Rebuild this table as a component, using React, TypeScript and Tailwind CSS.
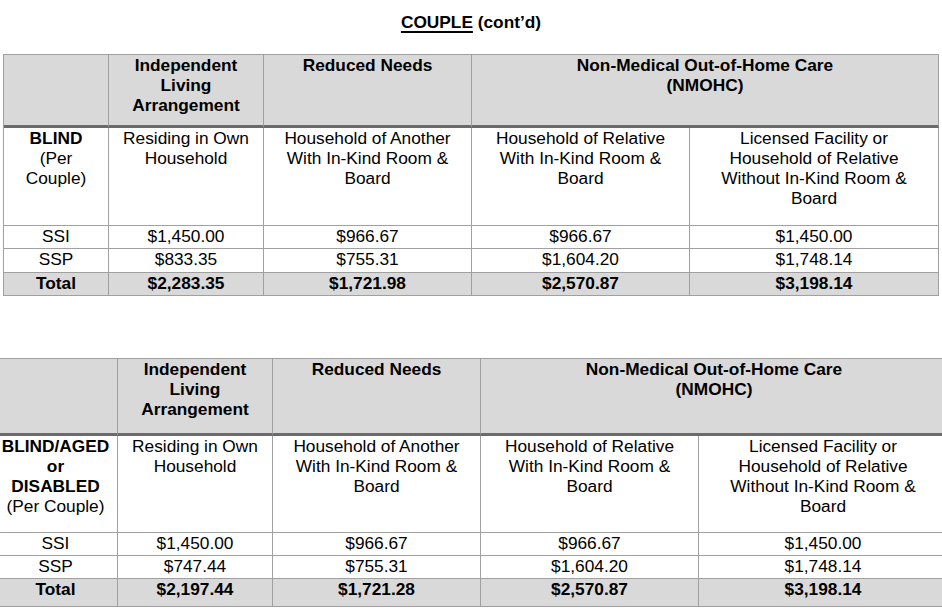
import React from "react";

type Block = {
  rowLabel: React.ReactNode;
  ssi: string[];
  ssp: string[];
  total: string[];
};

const subHeads = [
  ["Residing in Own", "Household"],
  ["Household of Another", "With In-Kind Room &", "Board"],
  ["Household of Relative", "With In-Kind Room &", "Board"],
  ["Licensed Facility or", "Household of Relative", "Without In-Kind Room &", "Board"],
];

function Lines({ lines }: { lines: string[] }) {
  return (
    <>
      {lines.map((l, i) => (
        <div key={i} className="whitespace-nowrap">
          {l}
        </div>
      ))}
    </>
  );
}

const cell = "border-r border-b border-[#a0a0a0] text-center";
const headCell = "border-r border-b-[3px] border-[#a0a0a0] border-b-[#6b6b6b] bg-[#d9d9d9] text-center font-bold";

function RateTable({ block, wide }: { block: Block; wide?: boolean }) {
  const grid = wide
    ? "grid grid-cols-[124px_155px_208px_218px_249px] w-[955px] -ml-[6px] border-t border-[#a0a0a0]"
    : "grid grid-cols-[105px_155px_208px_218px_249px] w-[936px] ml-[3px] border-l border-t border-[#a0a0a0]";
  const h = wide
    ? { head: "h-[77px]", sub: "h-[97px]", ssi: "h-[23px]", ssp: "h-[23px]", total: "h-[28px]" }
    : { head: "h-[73px]", sub: "h-[98px]", ssi: "h-[23px]", ssp: "h-[24px]", total: "h-[23px]" };

  return (
    <div className={grid}>
      {/* header */}
      <div className={`${headCell} ${h.head}`} />
      <div className={`${headCell} ${h.head}`}>
        <Lines lines={["Independent", "Living", "Arrangement"]} />
      </div>
      <div className={`${headCell} ${h.head}`}>Reduced Needs</div>
      <div className={`${headCell} ${h.head} col-span-2`}>
        <Lines lines={["Non-Medical Out-of-Home Care", "(NMOHC)"]} />
      </div>

      {/* arrangement descriptions */}
      <div className={`${cell} ${h.sub}`}>{block.rowLabel}</div>
      {subHeads.map((s, i) => (
        <div key={i} className={`${cell} ${h.sub}`}>
          <Lines lines={s} />
        </div>
      ))}

      <div className={`${cell} ${h.ssi}`}>SSI</div>
      {block.ssi.map((v, i) => (
        <div key={i} className={`${cell} ${h.ssi}`}>{v}</div>
      ))}

      <div className={`${cell} ${h.ssp}`}>SSP</div>
      {block.ssp.map((v, i) => (
        <div key={i} className={`${cell} ${h.ssp}`}>{v}</div>
      ))}

      <div className={`${cell} ${h.total} bg-[#d9d9d9] font-bold`}>Total</div>
      {block.total.map((v, i) => (
        <div key={i} className={`${cell} ${h.total} bg-[#d9d9d9] font-bold`}>{v}</div>
      ))}
    </div>
  );
}

const blind: Block = {
  rowLabel: (
    <>
      <div className="font-bold">BLIND</div>
      <div>(Per</div>
      <div>Couple)</div>
    </>
  ),
  ssi: ["$1,450.00", "$966.67", "$966.67", "$1,450.00"],
  ssp: ["$833.35", "$755.31", "$1,604.20", "$1,748.14"],
  total: ["$2,283.35", "$1,721.98", "$2,570.87", "$3,198.14"],
};

const agedDisabled: Block = {
  rowLabel: (
    <>
      <div className="font-bold">BLIND/AGED</div>
      <div className="font-bold">or</div>
      <div className="font-bold">DISABLED</div>
      <div className="whitespace-nowrap">(Per Couple)</div>
    </>
  ),
  ssi: ["$1,450.00", "$966.67", "$966.67", "$1,450.00"],
  ssp: ["$747.44", "$755.31", "$1,604.20", "$1,748.14"],
  total: ["$2,197.44", "$1,721.28", "$2,570.87", "$3,198.14"],
};

export default function App() {
  return (
    <div className="h-[610px] w-[942px] overflow-hidden bg-white font-['Liberation_Sans',Arial,sans-serif] text-[17.3px] leading-[20px] text-black">
      <h1 className="pt-[12px] text-center font-bold">
        <span className="underline decoration-[1.5px] underline-offset-[3px]">COUPLE</span> (cont’d)
      </h1>
      <div className="mt-[22px]">
        <RateTable block={blind} />
      </div>
      <div className="mt-[62px]">
        <RateTable block={agedDisabled} wide />
      </div>
    </div>
  );
}
